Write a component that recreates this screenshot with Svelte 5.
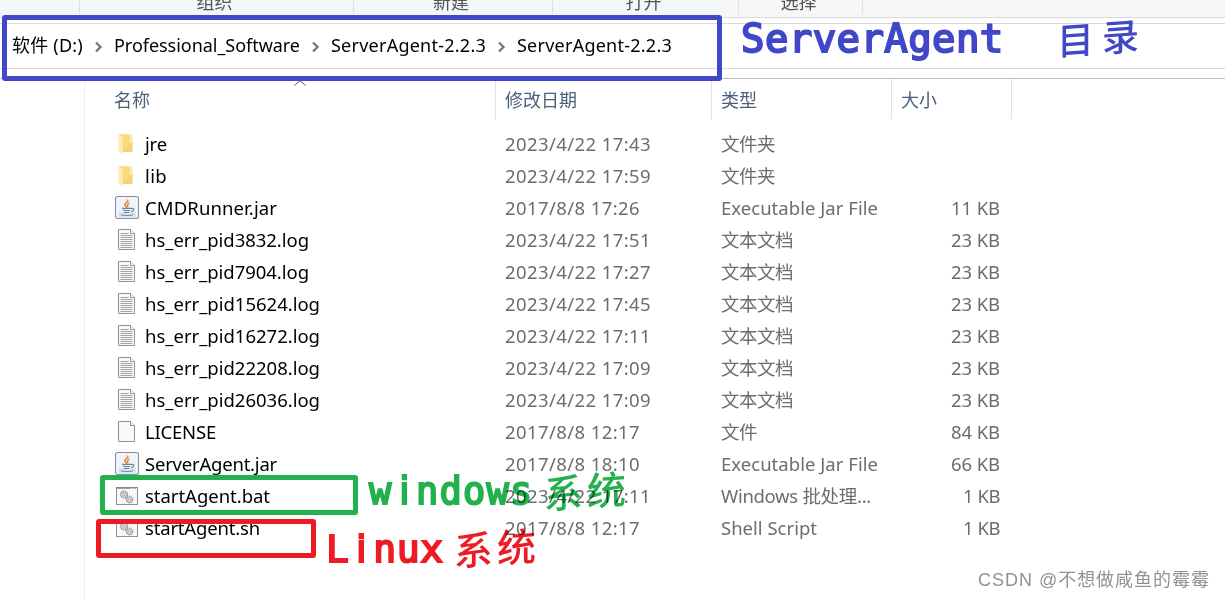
<script>
  const groups = [
    { label: '', w: 80 },
    { label: '组织', w: 274 },
    { label: '新建', w: 199 },
    { label: '打开', w: 186 },
    { label: '选择', w: 124 }
  ];
  const crumbs = [
    { t: '软件 (D:)', w: 71 },
    { t: 'Professional_Software', w: 186 },
    { t: 'ServerAgent-2.2.3', w: 155 },
    { t: 'ServerAgent-2.2.3', w: 155 }
  ];
  const folder = '文件夹', txt = '文本文档', jar = 'Executable Jar File';
  const files = [
    ['folder', 'jre', 22, '2023/4/22 17:43', folder, ''],
    ['folder', 'lib', 22, '2023/4/22 17:59', folder, ''],
    ['jar', 'CMDRunner.jar', 132, '2017/8/8 17:26', jar, '11 KB'],
    ['log', 'hs_err_pid3832.log', 164, '2023/4/22 17:51', txt, '23 KB'],
    ['log', 'hs_err_pid7904.log', 164, '2023/4/22 17:27', txt, '23 KB'],
    ['log', 'hs_err_pid15624.log', 175, '2023/4/22 17:45', txt, '23 KB'],
    ['log', 'hs_err_pid16272.log', 175, '2023/4/22 17:11', txt, '23 KB'],
    ['log', 'hs_err_pid22208.log', 175, '2023/4/22 17:09', txt, '23 KB'],
    ['log', 'hs_err_pid26036.log', 175, '2023/4/22 17:09', txt, '23 KB'],
    ['file', 'LICENSE', 71, '2017/8/8 12:17', '文件', '84 KB'],
    ['jar', 'ServerAgent.jar', 132, '2017/8/8 18:10', jar, '66 KB'],
    ['bat', 'startAgent.bat', 125, '2023/4/22 17:11', 'Windows 批处理...', '1 KB'],
    ['bat', 'startAgent.sh', 115, '2017/8/8 12:17', 'Shell Script', '1 KB']
  ];
  const typeWidth = { [folder]: 54, [txt]: 72, 文件: 36, [jar]: 157, 'Windows 批处理...': 150, 'Shell Script': 96 };

  // Spreads or tightens the letters so that the text takes the given width.
  function fit(node, width) {
    if (!width) return;
    const n = node.textContent.length;
    node.style.letterSpacing = (width - node.getBoundingClientRect().width) / n + 'px';
  }
</script>

{#snippet icon(kind)}
  <svg class="icon" width="26" height="26" viewBox="0 0 26 26">
    {#if kind === 'folder'}
      <path d="M8 3.500h7.500v8h3V21H8z" fill="#f6d071" />
      <path d="M8 3.500h7.500v10L9 19z" fill="#f9d981" />
      <path d="M16 3.500h2.500v8.500h-2.500z" fill="#fdeaae" />
      <path d="M4.500 3.500L9 6.500V24l-4.500-3.500z" fill="#ffe9a9" />
      <path d="M4.500 3.500h5v3z" fill="#f5cf6c" />
    {:else if kind === 'jar'}
      <rect x="1.600" y="1.600" width="22.800" height="21.800" rx="2" fill="#eef3f7" stroke="#8494a8" stroke-width="1.300" />
      <rect x="3" y="3" width="20" height="19" fill="none" stroke="#fff" />
      <path d="M4 17h18v5H4z" fill="#dde5ec" />
      <path d="M13.500 4.500c2 2-4.500 3.700-2 6.500l1.500 1.700M15.500 8c-3 1.500-2.200 2.500-1.200 3.700" fill="none" stroke="#e5873a" stroke-width="1.500" />
      <path d="M8 13.300h9M9 15.500h7M10 17.500h5M7 19.700c3 1 9 1 12 0M17 13.500c4-1 3 2.800 0 3" fill="none" stroke="#6682a3" stroke-width="1.200" />
    {:else if kind === 'bat'}
      <rect x="2.500" y="4.500" width="21" height="17" fill="#f8f8f8" stroke="#929292" />
      <path d="M2 5h22" stroke="#858585" stroke-width="1.500" />
      <path d="M17 5.500h1M19.500 5.500h1M22 5.500h1" stroke="#fff" />
      <circle cx="10" cy="11.500" r="3.200" fill="#e5e8eb" stroke="#939aa0" stroke-width="1.800" stroke-dasharray="1.500 .7" />
      <circle cx="10" cy="11.500" r="1.200" fill="#fff" stroke="#939aa0" stroke-width=".8" />
      <circle cx="15.500" cy="16.500" r="3" fill="#e5e8eb" stroke="#939aa0" stroke-width="1.800" stroke-dasharray="1.500 .7" />
      <circle cx="15.500" cy="16.500" r="1" fill="#fff" stroke="#939aa0" stroke-width=".8" />
    {:else}
      <path d="M4.500 2.500h12l4 4v16h-16z" fill="#fafafa" stroke="#8f8f8f" />
      <path d="M16.500 2.500v4h4" fill="#fff" stroke="#8f8f8f" />
      {#if kind === 'log'}
        <path d="M6.500 6.500h8M6.500 8.500h12M6.500 10.500h12M6.500 12.500h12M6.500 14.500h12M6.500 16.500h12M6.500 18.500h12M6.500 20.500h12" stroke="#a2a2a2" />
      {/if}
    {/if}
  </svg>
{/snippet}

<main>
  <div class="ribbon">
    {#each groups as g}
      <div class="group" style:width="{g.w}px"><span>{g.label}</span></div>
    {/each}
  </div>
  <nav>
    {#each crumbs as c, i}
      {#if i}
        <svg class="sep" width="10" height="12" viewBox="0 0 10 12"><path d="M2 1.500l4.500 4.500L2 10.500" fill="none" stroke="#777" stroke-width="2.300" /></svg>
      {/if}
      <span class="crumb" style:width="{c.w}px"><span use:fit={c.w}>{c.t}</span></span>
    {/each}
  </nav>
  <div class="body">
    <aside></aside>
    <section>
      <div class="head">
        <div class="h name">名称
          <svg class="sort" width="14" height="8" viewBox="0 0 14 8"><path d="M1.500 6.500L7 1.500l5.500 5" fill="none" stroke="#555" /></svg>
        </div>
        <div class="h date">修改日期</div>
        <div class="h type">类型</div>
        <div class="h size">大小</div>
      </div>
      {#each files as [kind, name, w, date, type, size]}
        <div class="row">
          <div class="c-name">{@render icon(kind)}<span use:fit={w}>{name}</span></div>
          <div class="c-date"><span use:fit={date.length === 15 ? 146 : 135}>{date}</span></div>
          <div class="c-type"><span use:fit={typeWidth[type]}>{type}</span></div>
          <div class="c-size"><span use:fit={size.length === 5 ? 49 : 37}>{size}</span></div>
        </div>
      {/each}
    </section>
  </div>

  <div class="box blue"></div>
  <div class="box green"></div>
  <div class="box red"></div>
  <div class="note n-blue"><span class="mono">ServerAgent</span><span class="han">目录</span></div>
  <div class="note n-green"><span class="mono">w<i>i</i>ndows</span><span class="han">系统</span></div>
  <div class="note n-red"><span class="mono">L<i>i</i>nux</span><span class="han">系统</span></div>
  <div class="mark"><span use:fit={232}>CSDN @不想做咸鱼的霉霉</span></div>
</main>

<style>
  :global(body) { background: #fff; overflow: hidden; }
  main {
    position: relative; width: 1225px; height: 600px; overflow: hidden;
    font: 18.5px/32px 'Noto Sans', 'Noto Sans CJK SC', sans-serif; color: #000; white-space: nowrap;
  }
  .ribbon { display: flex; height: 17px; background: #f5f6f7; border-bottom: 1px solid #d9dadb; }
  .group {
    height: 14px; box-sizing: border-box; border-right: 1px solid #dedfe0;
    display: flex; justify-content: center; align-items: flex-end;
    font: 18px/26px 'Noto Sans CJK SC', sans-serif; color: #555;
  }
  .group span { margin: 0 4px 0 0; }
  nav {
    height: 44px; margin-top: 5px; padding-left: 12px; display: flex; align-items: center;
    border-top: 1px solid #d9d9d9; border-bottom: 1px solid #d9d9d9;
  }
  .crumb { display: block; padding-bottom: 2px; font-size: 18px; }
  .sep { margin: 2px 10px 0 11px; flex: none; }
  .body { display: flex; height: 521px; margin-top: 9px; border-top: 1px solid #bdbdbd; }
  aside { width: 84px; border-right: 1px solid #f0f0f0; }
  section { flex: 1; }
  .head { display: flex; height: 40px; margin-bottom: 9px; }
  .h {
    box-sizing: border-box; border-right: 1px solid #e2e2e2; padding-left: 9px;
    font: 18px/40px 'Noto Sans CJK SC', sans-serif; color: #4c607a;
  }
  .name { position: relative; width: 411px; padding-left: 29px; }
  .sort { position: absolute; left: 208px; top: 0; }
  .date { width: 216px; }
  .type { width: 180px; }
  .size { width: 120px; }
  .row { display: flex; height: 32px; line-height: 31px; color: #6d6d6d; }
  .c-name { width: 391px; padding-left: 29px; display: flex; align-items: center; color: #000; }
  .c-name span { padding-bottom: 2px; }
  .icon { flex: none; margin-right: 5px; }
  .c-date { width: 216px; }
  .c-type { width: 180px; }
  .c-size { width: 99px; text-align: right; }
  .box { position: absolute; box-sizing: border-box; border-radius: 3px; }
  .blue { left: 2px; top: 15px; width: 720px; height: 66px; border: 5px solid #4048c8; }
  .green { left: 100px; top: 475px; width: 258px; height: 40px; border: 5px solid #22b14c; }
  .red { left: 96px; top: 519px; width: 220px; height: 39px; border: 5px solid #ed1c24; }
  .note { position: absolute; display: flex; align-items: center; height: 44px; line-height: 44px; }
  .mono { font-family: 'DejaVu Sans Mono', monospace; -webkit-text-stroke: 2px currentColor; }
  .mono i { display: inline-block; text-align: center; font-family: 'DejaVu Sans', sans-serif; font-style: normal; letter-spacing: 0; }
  .han { font-family: 'Noto Sans CJK SC', sans-serif; font-weight: 500; transform: skewY(-4deg); }
  .n-blue { left: 741px; top: 17px; color: #4048c8; }
  .n-blue .mono { width: 316px; font-size: 39px; letter-spacing: 0.4px; }
  .n-blue .han { font-size: 37px; letter-spacing: 8px; margin-top: -6px; }
  .n-green { left: 369px; top: 470px; color: #22b14c; mix-blend-mode: multiply; }
  .n-green .mono { width: 175px; font-size: 37px; letter-spacing: 1.2px; }
  .n-green .han, .n-red .han { font-size: 39px; letter-spacing: 4px; margin-top: -6px; }
  .n-green i, .n-red i { width: 23.6px; }
  .n-red { left: 326px; top: 527px; color: #ed1c24; mix-blend-mode: multiply; }
  .n-red .mono { width: 128px; font-size: 38px; letter-spacing: 0.7px; }
  .mark { position: absolute; left: 978px; top: 564px; color: #929292; font: 18px/32px 'Liberation Sans', 'Noto Sans CJK SC', sans-serif; }
</style>
